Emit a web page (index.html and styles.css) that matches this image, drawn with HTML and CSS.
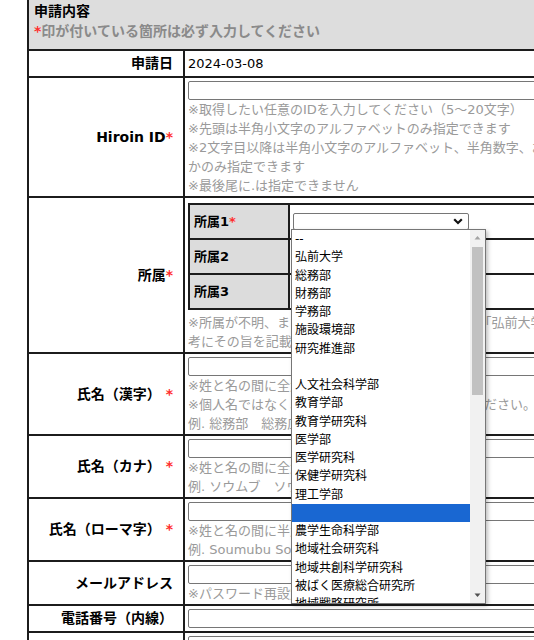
FILE: index.html
```html
<!DOCTYPE html>
<html lang="ja">
<head>
<meta charset="utf-8">
<title>申請内容</title>
<link rel="stylesheet" href="styles.css">
</head>
<body>
<div class="page">
  <table class="form">
    <colgroup><col class="col-label"><col class="col-value"></colgroup>
    <tr>
      <td colspan="2" class="head">
        <div class="head-title">申請内容</div>
        <div class="head-sub"><span class="req">*</span>印が付いている箇所は必ず入力してください</div>
      </td>
    </tr>
    <tr>
      <th class="lbl">申請日</th>
      <td class="val date">2024-03-08</td>
    </tr>
    <tr>
      <th class="lbl">Hiroin ID<span class="req">*</span></th>
      <td class="val">
        <input class="text" type="text">
        <div class="note">※取得したい任意のIDを入力してください（5〜20文字）</div>
        <div class="note">※先頭は半角小文字のアルファベットのみ指定できます</div>
        <div class="note">※2文字目以降は半角小文字のアルファベット、半角数字、および記号（-_.）のいずれ<br>かのみ指定できます</div>
        <div class="note">※最後尾に.は指定できません</div>
      </td>
    </tr>
    <tr>
      <th class="lbl">所属<span class="req">*</span></th>
      <td class="val">
        <table class="sub">
          <colgroup><col class="sub-label"><col></colgroup>
          <tr>
            <th class="sub-lbl">所属1<span class="req">*</span></th>
            <td class="sub-val"><div class="select" role="combobox" aria-expanded="true"><svg class="chev" width="10" height="7" viewBox="0 0 10 7"><path d="M1.2 1.3 L5 5 L8.8 1.3" fill="none" stroke="#111" stroke-width="2.2"/></svg></div></td>
          </tr>
          <tr>
            <th class="sub-lbl">所属2</th>
            <td class="sub-val"><div class="select"><svg class="chev" width="10" height="7" viewBox="0 0 10 7"><path d="M1.2 1.3 L5 5 L8.8 1.3" fill="none" stroke="#111" stroke-width="2.2"/></svg></div></td>
          </tr>
          <tr>
            <th class="sub-lbl">所属3</th>
            <td class="sub-val"><div class="select"><svg class="chev" width="10" height="7" viewBox="0 0 10 7"><path d="M1.2 1.3 L5 5 L8.8 1.3" fill="none" stroke="#111" stroke-width="2.2"/></svg></div></td>
          </tr>
        </table>
        <div class="note">※所属が不明、または該当するものがない場合は、「弘前大学」を選択し、備<br>考にその旨を記載してください。</div>
      </td>
    </tr>
    <tr>
      <th class="lbl">氏名（漢字） <span class="req">*</span></th>
      <td class="val">
        <input class="text" type="text">
        <div class="note">※姓と名の間に全角スペースを入れてください。</div>
        <div class="note">※個人名ではなく、部署名や組織名等を入力してください。</div>
        <div class="note">例. 総務部　総務広報課</div>
      </td>
    </tr>
    <tr>
      <th class="lbl">氏名（カナ） <span class="req">*</span></th>
      <td class="val">
        <input class="text" type="text">
        <div class="note">※姓と名の間に全角スペースを入れてください。</div>
        <div class="note">例. ソウムブ　ソウムコウホウカ</div>
      </td>
    </tr>
    <tr>
      <th class="lbl">氏名（ローマ字） <span class="req">*</span></th>
      <td class="val">
        <input class="text" type="text">
        <div class="note">※姓と名の間に半角スペースを入れてください。</div>
        <div class="note">例. Soumubu Soumukouhouka</div>
      </td>
    </tr>
    <tr>
      <th class="lbl">メールアドレス</th>
      <td class="val">
        <input class="text" type="text">
        <div class="note">※パスワード再設定の際に使用します。</div>
      </td>
    </tr>
    <tr>
      <th class="lbl">電話番号（内線）</th>
      <td class="val"><input class="text" type="text"></td>
    </tr>
    <tr>
      <th class="lbl">備考</th>
      <td class="val"><textarea class="area"></textarea></td>
    </tr>
  </table>

  <div class="listbox" role="listbox">
    <div class="opts">
      <div class="opt">--</div>
      <div class="opt">弘前大学</div>
      <div class="opt">総務部</div>
      <div class="opt">財務部</div>
      <div class="opt">学務部</div>
      <div class="opt">施設環境部</div>
      <div class="opt">研究推進部</div>
      <div class="opt"></div>
      <div class="opt">人文社会科学部</div>
      <div class="opt">教育学部</div>
      <div class="opt">教育学研究科</div>
      <div class="opt">医学部</div>
      <div class="opt">医学研究科</div>
      <div class="opt">保健学研究科</div>
      <div class="opt">理工学部</div>
      <div class="opt selected"></div>
      <div class="opt">農学生命科学部</div>
      <div class="opt">地域社会研究科</div>
      <div class="opt">地域共創科学研究科</div>
      <div class="opt">被ばく医療総合研究所</div>
      <div class="opt">地域戦略研究所</div>
    </div>
    <div class="sbar">
      <svg class="arrow" width="15" height="15" viewBox="0 0 15 15"><path d="M4.5 9.5 L7.5 6 L10.5 9.5 Z" fill="#a3a3a3"/></svg>
      <div class="thumb-area"><div class="thumb"></div></div>
      <svg class="arrow" width="15" height="15" viewBox="0 0 15 15"><path d="M4.5 5.5 L7.5 9 L10.5 5.5 Z" fill="#505050"/></svg>
    </div>
  </div>
</div>
</body>
</html>
```

FILE: styles.css
```css
html {
  overflow: hidden;
  background: #fff;
}
body {
  margin: 0;
  font-family: "DejaVu Sans", "Noto Sans CJK JP", sans-serif;
  color: #000;
}
.page {
  position: relative;
  width: 534px;
  height: 640px;
  overflow: hidden;
}
.form {
  margin-left: 27px;
  border-collapse: collapse;
  table-layout: fixed;
  width: 760px;
}
.col-label { width: 156px; }
.head {
  background: #dddddd;
  border: 2px solid #1c1c1c;
  border-top: 0;
  padding: 1px 5px 8px;
  font-size: 14px;
  font-weight: bold;
  line-height: 20px;
}
.head-sub { color: #8a8a8a; }
.req { color: #ff2d2d; }
.lbl {
  border: 2px solid #1c1c1c;
  padding: 3px 10px 3px 4px;
  text-align: right;
  font-size: 14px;
  font-weight: bold;
  line-height: 19px;
  vertical-align: middle;
  white-space: nowrap;
}
.val {
  border: 2px solid #1c1c1c;
  padding: 3px 3px 1px 3px;
  vertical-align: top;
}
.date {
  vertical-align: middle;
  padding: 3px;
  font-size: 13px;
  line-height: 19px;
}
.text {
  display: block;
  box-sizing: border-box;
  width: 100%;
  height: 19px;
  margin: 0;
  padding: 0;
  border: 1px solid #767676;
  border-radius: 2px;
  background: #fff;
}
.area {
  display: block;
  box-sizing: border-box;
  width: 100%;
  height: 70px;
  margin: 0;
  border: 1px solid #767676;
  border-radius: 2px;
  resize: none;
}
.note {
  color: #9a9a9a;
  font-size: 13px;
  line-height: 19px;
  white-space: nowrap;
}
.sub {
  border-collapse: collapse;
  table-layout: fixed;
  width: 100%;
  margin: 2px 0 3px;
}
.sub-label { width: 100px; }
.sub-lbl {
  border: 2px solid #1c1c1c;
  background: #dcdcdc;
  text-align: left;
  font-size: 13px;
  font-weight: bold;
  line-height: 19px;
  padding: 7px 4px;
}
.sub-val {
  border: 2px solid #1c1c1c;
  padding: 0 3px;
  vertical-align: middle;
}
.select {
  box-sizing: border-box;
  width: 176px;
  height: 17px;
  border: 1px solid #767676;
  border-radius: 2px;
  background: #fff;
  display: flex;
  align-items: center;
  justify-content: flex-end;
  padding-right: 5px;
}
.listbox {
  position: absolute;
  left: 291px;
  top: 229px;
  width: 195px;
  height: 375px;
  box-sizing: border-box;
  border: 1px solid #767676;
  background: #fff;
  box-shadow: 2px 2px 4px rgba(0, 0, 0, 0.25);
  display: flex;
  overflow: hidden;
}
.opts {
  flex: 1;
  min-width: 0;
}
.opt {
  height: 18.25px;
  line-height: 18.25px;
  padding-left: 3px;
  font-size: 12px;
  color: #000;
  white-space: nowrap;
}
.opt.selected { background: #1967d2; }
.sbar {
  width: 15px;
  background: #f1f1f1;
  display: flex;
  flex-direction: column;
}
.arrow { display: block; flex: none; }
.thumb-area {
  flex: 1;
  padding: 2px 2px;
}
.thumb {
  height: 148px;
  background: #c1c1c1;
}
```
